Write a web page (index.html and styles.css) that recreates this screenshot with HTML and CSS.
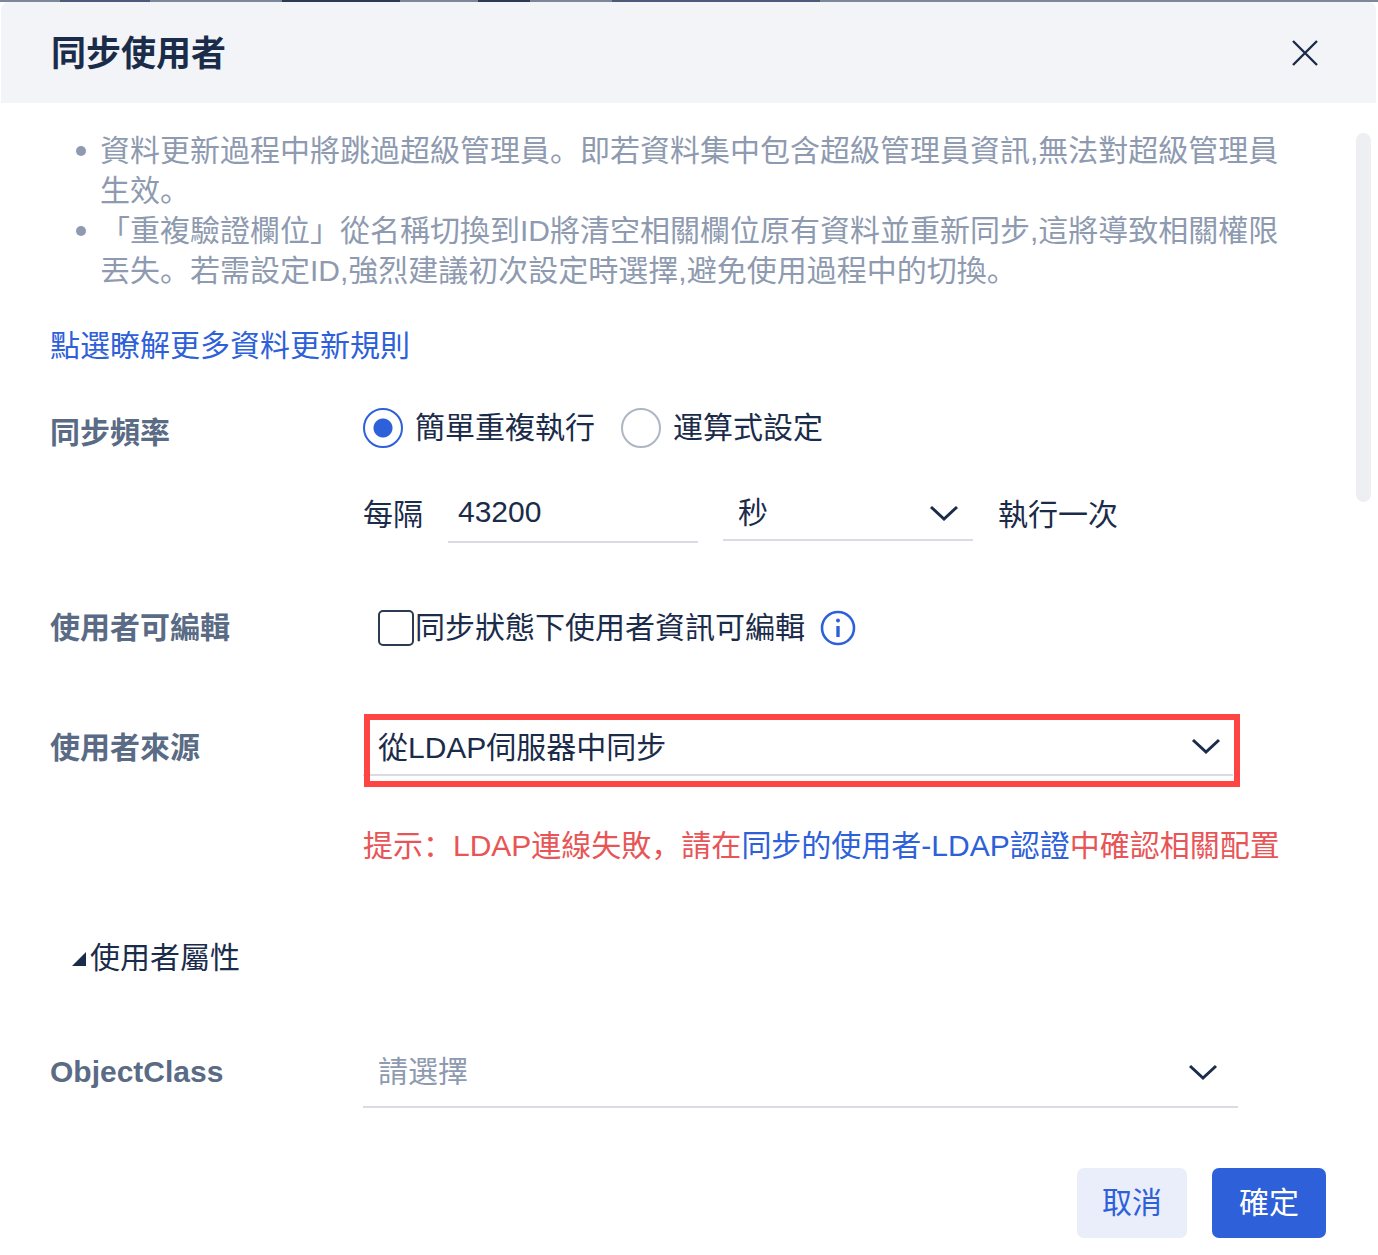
FILE: index.html
```html
<!doctype html>
<html>
  <head>
    <title>同步使用者</title>
    <meta name="viewport" content="width=device-width, initial-scale=1">
    <link rel="stylesheet" href="styles.css">
  </head>
  <body>
    <div class="backdrop">
      <span class="frag frag-a"></span>
      <span class="frag frag-b"></span>
      <span class="frag frag-c"></span>
      <span class="frag frag-d"></span>
    </div>
    <div class="dialog">
      <header class="dialog-head">
        <h1>同步使用者</h1>
        <svg class="close" width="28" height="28" viewBox="0 0 28 28">
          <path d="M2 2 L26 26 M26 2 L2 26" />
        </svg>
      </header>
      <div class="scrollbar"></div>
      <ul class="notes">
        <li>資料更新過程中將跳過超級管理員。即若資料集中包含超級管理員資訊,無法對超級管理員生效。</li>
        <li>「重複驗證欄位」從名稱切換到ID將清空相關欄位原有資料並重新同步,這將導致相關權限丟失。若需設定ID,強烈建議初次設定時選擇,避免使用過程中的切換。</li>
      </ul>
      <a class="rules-link">點選瞭解更多資料更新規則</a>

      <div class="row row-freq">
        <label class="row-label">同步頻率</label>
        <div class="row-body radios">
          <span class="radio checked"></span>
          <span class="radio-text">簡單重複執行</span>
          <span class="radio"></span>
          <span class="radio-text">運算式設定</span>
        </div>
      </div>

      <div class="row row-interval">
        <div class="row-body interval">
          <span class="interval-text">每隔</span>
          <div class="field number">43200</div>
          <div class="field unit">
            <span>秒</span>
            <svg class="chevron" width="30" height="18" viewBox="0 0 30 18"><path d="M2 3 L15 15 L28 3" /></svg>
          </div>
          <span class="interval-text">執行一次</span>
        </div>
      </div>

      <div class="row row-edit">
        <label class="row-label">使用者可編輯</label>
        <div class="row-body edit">
          <span class="checkbox"></span>
          <span>同步狀態下使用者資訊可編輯</span>
          <svg class="info" width="36" height="36" viewBox="0 0 36 36">
            <circle cx="18" cy="18" r="16" />
            <path d="M18 16 V27" />
            <circle class="dot" cx="18" cy="10.5" r="2" />
          </svg>
        </div>
      </div>

      <div class="row row-source">
        <label class="row-label">使用者來源</label>
        <div class="row-body select source">
          <span>從LDAP伺服器中同步</span>
          <svg class="chevron" width="30" height="18" viewBox="0 0 30 18"><path d="M2 3 L15 15 L28 3" /></svg>
          <div class="red-mark"></div>
        </div>
      </div>

      <p class="hint">提示：LDAP連線失敗，請在<a>同步的使用者-LDAP認證</a>中確認相關配置</p>

      <div class="section-title"><span class="triangle"></span>使用者屬性</div>

      <div class="row row-class">
        <label class="row-label">ObjectClass</label>
        <div class="row-body select placeholder">
          <span>請選擇</span>
          <svg class="chevron" width="30" height="18" viewBox="0 0 30 18"><path d="M2 3 L15 15 L28 3" /></svg>
        </div>
      </div>

      <footer class="actions">
        <button class="btn btn-cancel">取消</button>
        <button class="btn btn-ok">確定</button>
      </footer>
    </div>
  </body>
</html>
```

FILE: styles.css
```css
html {
  box-sizing: border-box;
}
*, *::before, *::after {
  box-sizing: inherit;
}
body {
  margin: 0;
  height: 1255px;
  overflow: hidden;
  background: #fff;
  color: #1b2c4a;
  font-family: "Liberation Sans", "Noto Sans CJK SC", sans-serif;
  font-size: 30px;
  line-height: 40px;
}
h1, ul, p {
  margin: 0;
  padding: 0;
}

.backdrop {
  display: flex;
  height: 2px;
  background: #7c8799;
}
.frag {
  height: 2px;
  background: #2c3a55;
}
.frag-a { margin-left: 60px; width: 90px; background: #4a5a78; }
.frag-b { margin-left: 132px; width: 118px; }
.frag-c { margin-left: 78px; width: 52px; }
.frag-d { margin-left: 82px; width: 208px; background: #4a5a78; }

.dialog {
  position: relative;
  margin: 0 2px 0 1px;
}
.dialog-head {
  display: flex;
  align-items: center;
  justify-content: space-between;
  height: 101px;
  padding: 0 57px 0 50px;
  background: #f2f4f8;
  border-radius: 8px 8px 0 0;
}
.dialog-head h1 {
  padding-top: 2px;
  font-size: 35px;
  font-weight: 700;
  color: #1b2c4a;
}
.close path {
  fill: none;
  stroke: #1b2c4a;
  stroke-width: 2.4;
}
.scrollbar {
  position: absolute;
  top: 131px;
  right: 5px;
  width: 15px;
  height: 369px;
  border-radius: 8px;
  background: #edeff3;
}

.notes {
  margin: 28px 90px 0 99px;
  color: #8e9aaf;
  list-style: none;
}
.notes li {
  position: relative;
}
.notes li::before {
  content: "";
  position: absolute;
  left: -24px;
  top: 15px;
  width: 10px;
  height: 10px;
  border-radius: 50%;
  background: #8e9aaf;
}
.rules-link {
  display: block;
  margin: 35px 0 0 49px;
  color: #2d60d9;
}

.row {
  display: flex;
  padding-left: 49px;
}
.row-label {
  width: 313px;
  flex: none;
  font-weight: 700;
  color: #5a6b85;
}
.row-body {
  display: flex;
  align-items: center;
}

.row-freq {
  margin-top: 42px;
}
.row-freq .row-label {
  padding-top: 5px;
}
.radios {
  align-items: flex-start;
}
.radio {
  width: 40px;
  height: 40px;
  border: 2px solid #aeb6c4;
  border-radius: 50%;
  margin-right: 12px;
}
.radio.checked {
  border-color: #2d60d9;
  background: radial-gradient(circle, #2d60d9 0 9px, #fff 10px);
}
.radio-text {
  margin-right: 26px;
}

.row-interval {
  margin-top: 38px;
  padding-left: 362px;
}
.interval {
  align-items: flex-start;
}
.interval-text {
  margin-top: 4px;
}
.field {
  height: 52px;
  padding: 1px 10px 0;
  border-bottom: 2px solid #d9dde3;
}
.number {
  width: 250px;
  margin: 0 25px;
}
.unit {
  display: flex;
  justify-content: space-between;
  width: 250px;
  height: 50px;
  margin-right: 25px;
  padding: 2px 14px 0 15px;
}
.unit .chevron {
  margin-top: 11px;
}
.chevron path {
  fill: none;
  stroke: #1b2c4a;
  stroke-width: 3;
}

.row-edit {
  margin-top: 65px;
}
.edit {
  padding-left: 15px;
}
.checkbox {
  width: 36px;
  height: 36px;
  margin-right: 1px;
  border: 2px solid #2c3a55;
  border-radius: 5px;
}
.info {
  margin-left: 15px;
}
.info circle {
  fill: none;
  stroke: #2d60d9;
  stroke-width: 2.6;
}
.info path {
  stroke: #2d60d9;
  stroke-width: 3.4;
}
.info .dot {
  fill: #2d60d9;
  stroke: none;
}

.select {
  position: relative;
  justify-content: space-between;
  width: 875px;
  padding: 0 17px 0 15px;
  border-bottom: 2px solid #d9dde3;
}
.row-source {
  margin-top: 68px;
}
.row-source .row-label {
  padding-top: 12px;
}
.source {
  height: 60px;
  width: 870px;
  padding-top: 6px;
  padding-right: 12px;
}
.source .chevron {
  margin-top: -4px;
}
.red-mark {
  position: absolute;
  left: 1px;
  top: -2px;
  width: 876px;
  height: 73px;
  border: 6px solid #ff4444;
}

.hint {
  margin: 50px 0 0 362px;
  color: #e85557;
  white-space: nowrap;
}
.hint a {
  color: #2d60d9;
}

.section-title {
  display: flex;
  align-items: center;
  margin: 72px 0 0 71px;
}
.triangle {
  width: 0;
  height: 0;
  margin: 2px 4px 0 0;
  border-left: 14px solid transparent;
  border-bottom: 14px solid #1b2c4a;
}

.row-class {
  margin-top: 74px;
}
.placeholder {
  height: 62px;
  padding-bottom: 8px;
  padding-right: 20px;
  margin-top: -6px;
  color: #8e9aaf;
}

.actions {
  display: flex;
  justify-content: flex-end;
  gap: 25px;
  margin: 60px 50px 0 0;
}
.btn {
  height: 70px;
  border: none;
  border-radius: 7px;
  font: inherit;
}
.btn-cancel {
  width: 110px;
  background: #e9eefa;
  color: #2d60d9;
}
.btn-ok {
  width: 114px;
  background: #2d60d9;
  color: #fff;
}
```
